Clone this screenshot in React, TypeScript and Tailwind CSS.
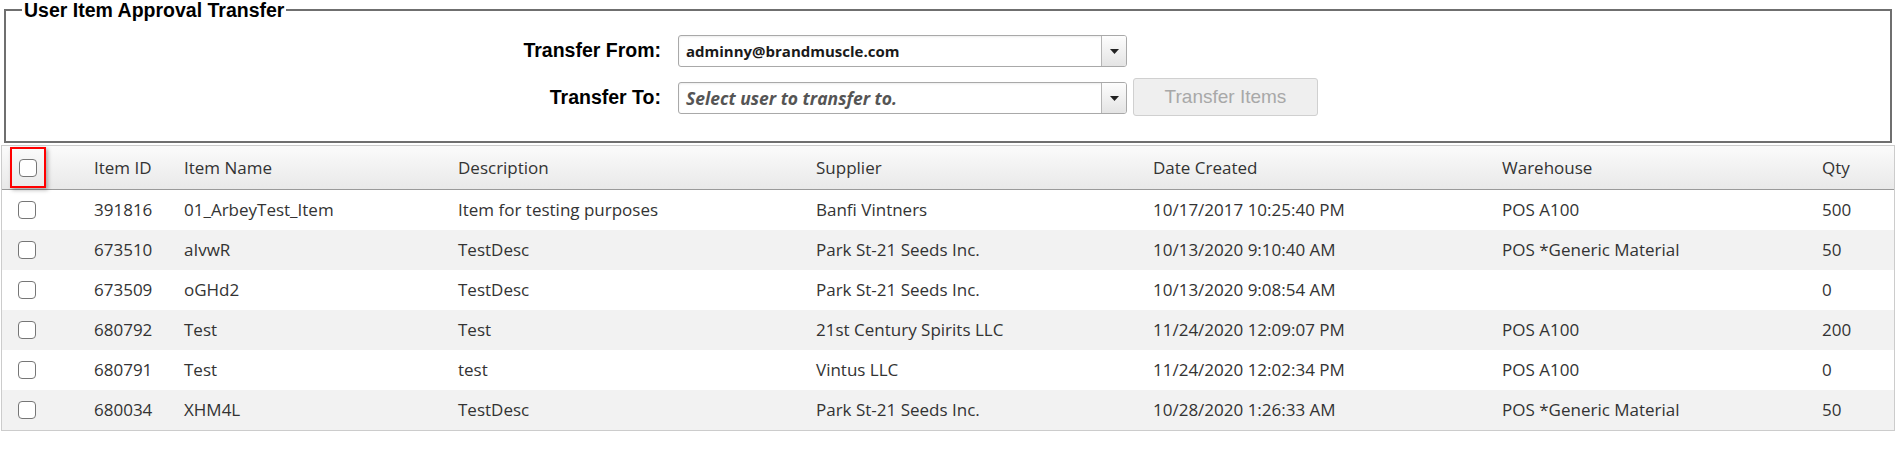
import React from 'react';

type Item = {
  id: string;
  name: string;
  description: string;
  supplier: string;
  created: string;
  warehouse: string;
  qty: string;
};

const items: Item[] = [
  { id: '391816', name: '01_ArbeyTest_Item', description: 'Item for testing purposes', supplier: 'Banfi Vintners', created: '10/17/2017 10:25:40 PM', warehouse: 'POS A100', qty: '500' },
  { id: '673510', name: 'aIvwR', description: 'TestDesc', supplier: 'Park St-21 Seeds Inc.', created: '10/13/2020 9:10:40 AM', warehouse: 'POS *Generic Material', qty: '50' },
  { id: '673509', name: 'oGHd2', description: 'TestDesc', supplier: 'Park St-21 Seeds Inc.', created: '10/13/2020 9:08:54 AM', warehouse: '', qty: '0' },
  { id: '680792', name: 'Test', description: 'Test', supplier: '21st Century Spirits LLC', created: '11/24/2020 12:09:07 PM', warehouse: 'POS A100', qty: '200' },
  { id: '680791', name: 'Test', description: 'test', supplier: 'Vintus LLC', created: '11/24/2020 12:02:34 PM', warehouse: 'POS A100', qty: '0' },
  { id: '680034', name: 'XHM4L', description: 'TestDesc', supplier: 'Park St-21 Seeds Inc.', created: '10/28/2020 1:26:33 AM', warehouse: 'POS *Generic Material', qty: '50' },
];

// columns line up with the grid's text starts
const cols = 'grid grid-cols-[92px_90px_274px_358px_337px_349px_320px_1fr] items-center';

const Checkbox: React.FC = () => (
  <span className="block w-[18px] h-[18px] rounded-[4px] border border-[#767676] bg-white" />
);

const ComboBox: React.FC<{ value?: string; placeholder?: string }> = ({ value, placeholder }) => (
  <div className="flex h-[32px] w-[449px] rounded-[3px] border border-[#a9a9a9] bg-white shadow-[inset_0_1px_2px_rgba(0,0,0,0.08)] overflow-hidden">
    <div className="flex-1 flex items-center pl-[7px] font-['Open_Sans',sans-serif] font-bold truncate">
      {value ? (
        <span className="text-[15px] text-[#1a1a1a]">{value}</span>
      ) : (
        <span className="text-[17.5px] italic text-[#555]">{placeholder}</span>
      )}
    </div>
    <div className="w-[25px] flex items-center justify-center border-l border-[#b5b5b5] bg-gradient-to-b from-[#fdfdfd] to-[#e4e4e4]">
      <svg width="9" height="5" viewBox="0 0 9 5">
        <path d="M0 0h9L4.5 5z" fill="#222" />
      </svg>
    </div>
  </div>
);

export default function App() {
  return (
    <div className="w-[1896px] bg-white font-['Liberation_Sans',Arial,sans-serif]">
      <div className="relative mt-[9px] ml-[4px] mr-[4px] h-[134px] border-2 border-[#6f6f6f] pt-[24px]">
        <span className="absolute top-[-11px] left-[16px] px-[2px] bg-white text-[19.5px] leading-[20px] font-bold text-black">
          User Item Approval Transfer
        </span>
        <div className="grid grid-cols-[672px_449px_auto] gap-y-[13px] items-center">
          <label className="text-right pr-[17px] text-[19.5px] font-bold text-black">Transfer From:</label>
          <ComboBox value="adminny@brandmuscle.com" />
          <div />
          <label className="text-right pr-[17px] text-[19.5px] font-bold text-black">Transfer To:</label>
          <ComboBox placeholder="Select user to transfer to." />
          <button
            disabled
            className="ml-[6px] -mt-[2px] h-[38px] w-[185px] rounded-[3px] border border-[#d0d0d0] bg-[#efefef] text-[19px] text-[#a8a8a8]"
          >
            Transfer Items
          </button>
        </div>
      </div>

      <div className="mt-[2px] ml-[1px] mr-[1px] border border-[#cccccc] font-['Open_Sans',sans-serif] text-[17px] text-[#333]">
        <div className={`${cols} h-[44px] border-b border-[#9a9a9a] bg-gradient-to-b from-[#fbfbfb] to-[#e9e9e9]`}>
          <div className="pl-[8px]">
            <div className="flex h-[41px] w-[36px] items-center justify-center border-2 border-[#ff0000] shadow-[2px_2px_4px_rgba(0,0,0,0.3)]">
              <Checkbox />
            </div>
          </div>
          <div>Item ID</div>
          <div>Item Name</div>
          <div>Description</div>
          <div>Supplier</div>
          <div>Date Created</div>
          <div>Warehouse</div>
          <div>Qty</div>
        </div>
        {items.map((item, i) => (
          <div key={item.id} className={`${cols} h-[40px] ${i % 2 === 1 ? 'bg-[#f2f2f2]' : 'bg-white'}`}>
            <div className="pl-[16px]">
              <Checkbox />
            </div>
            <div>{item.id}</div>
            <div>{item.name}</div>
            <div>{item.description}</div>
            <div>{item.supplier}</div>
            <div>{item.created}</div>
            <div>{item.warehouse}</div>
            <div>{item.qty}</div>
          </div>
        ))}
      </div>
    </div>
  );
}
